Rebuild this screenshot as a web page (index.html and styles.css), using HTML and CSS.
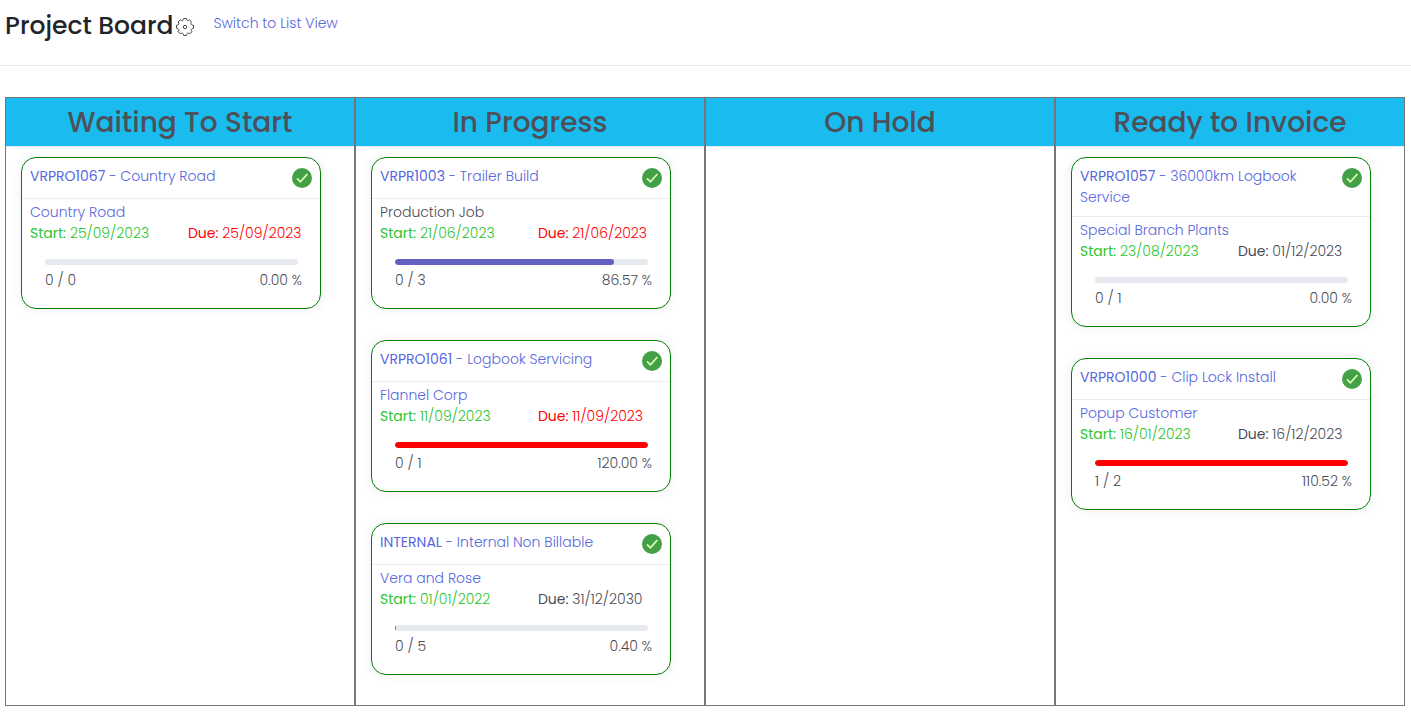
FILE: index.html
```html
<!DOCTYPE html>
<html lang="en">
<head>
    <meta charset="UTF-8">
    <meta name="viewport" content="width=device-width, initial-scale=1.0">
    <title>Project Board</title>
    <link rel="stylesheet" href="styles.css">
</head>
<body>
    <svg class="sprite" aria-hidden="true">
        <symbol id="check" viewBox="0 0 20 20">
            <circle cx="10" cy="10" r="10" fill="#43a047"/>
            <path d="M5 10.4l3.4 3.4L15.4 6" fill="none" stroke="#dcffb0" stroke-width="1.8"/>
        </symbol>
    </svg>
    <header class="page-header">
        <h1>Project Board</h1>
        <button class="settings" type="button" aria-label="Board settings">
            <svg viewBox="0 0 20 20" width="20" height="20" fill="none" stroke="#444" stroke-width="1">
                <path d="M8.600 1.500h2.800c.1 2.200 1.300 2.700 2.900 1.400l2.300 2c-1.400 1.800-.9 3 1.900 3.400v2.900c-2.300.3-2.900 1.600-1.500 3.600l-2 2c-1.900-1.400-3.200-.9-3.500 1.700H8.600c-.3-2.600-1.600-3.100-3.500-1.700l-2-2c1.400-2 .8-3.300-1.600-3.600V8.300c2.500-.4 3.100-1.600 1.700-3.400l2-2c1.700 1.300 3.100.8 3.400-1.400z" stroke-linejoin="round"/>
                <circle cx="10" cy="10" r="1.700"/>
            </svg>
        </button>
        <a class="switch" href="#">Switch to List View</a>
    </header>
    <main class="board">
        <section class="column">
            <h2>Waiting To Start</h2>
            <div class="cards">
                <article class="card">
                    <div class="card-head">
                        <a href="#"><b>VRPRO1067</b> - Country Road</a>
                        <svg class="check"><use href="#check"/></svg>
                    </div>
                    <div class="card-body">
                        <a href="#">Country Road</a>
                        <div class="dates">
                            <span class="start"><b>Start:</b> 25/09/2023</span>
                            <span class="overdue"><b>Due:</b> 25/09/2023</span>
                        </div>
                        <div class="bar"></div>
                        <div class="counts"><span>0 / 0</span><span>0.00 %</span></div>
                    </div>
                </article>
            </div>
        </section>
        <section class="column">
            <h2>In Progress</h2>
            <div class="cards">
                <article class="card">
                    <div class="card-head">
                        <a href="#"><b>VRPR1003</b> - Trailer Build</a>
                        <svg class="check"><use href="#check"/></svg>
                    </div>
                    <div class="card-body">
                        <span>Production Job</span>
                        <div class="dates">
                            <span class="start"><b>Start:</b> 21/06/2023</span>
                            <span class="overdue"><b>Due:</b> 21/06/2023</span>
                        </div>
                        <div class="bar"><div class="fill" style="width: 86.57%"></div></div>
                        <div class="counts"><span>0 / 3</span><span>86.57 %</span></div>
                    </div>
                </article>
                <article class="card">
                    <div class="card-head">
                        <a href="#"><b>VRPRO1061</b> - Logbook Servicing</a>
                        <svg class="check"><use href="#check"/></svg>
                    </div>
                    <div class="card-body">
                        <a href="#">Flannel Corp</a>
                        <div class="dates">
                            <span class="start"><b>Start:</b> 11/09/2023</span>
                            <span class="overdue"><b>Due:</b> 11/09/2023</span>
                        </div>
                        <div class="bar"><div class="fill over" style="width: 100%"></div></div>
                        <div class="counts"><span>0 / 1</span><span>120.00 %</span></div>
                    </div>
                </article>
                <article class="card">
                    <div class="card-head">
                        <a href="#"><b>INTERNAL</b> - Internal Non Billable</a>
                        <svg class="check"><use href="#check"/></svg>
                    </div>
                    <div class="card-body">
                        <a href="#">Vera and Rose</a>
                        <div class="dates">
                            <span class="start"><b>Start:</b> 01/01/2022</span>
                            <span><b>Due:</b> 31/12/2030</span>
                        </div>
                        <div class="bar"><div class="fill" style="width: 0.4%"></div></div>
                        <div class="counts"><span>0 / 5</span><span>0.40 %</span></div>
                    </div>
                </article>
            </div>
        </section>
        <section class="column">
            <h2>On Hold</h2>
            <div class="cards"></div>
        </section>
        <section class="column">
            <h2>Ready to Invoice</h2>
            <div class="cards">
                <article class="card">
                    <div class="card-head">
                        <a href="#"><b>VRPRO1057</b> - 36000km Logbook Service</a>
                        <svg class="check"><use href="#check"/></svg>
                    </div>
                    <div class="card-body">
                        <a href="#">Special Branch Plants</a>
                        <div class="dates">
                            <span class="start"><b>Start:</b> 23/08/2023</span>
                            <span><b>Due:</b> 01/12/2023</span>
                        </div>
                        <div class="bar"></div>
                        <div class="counts"><span>0 / 1</span><span>0.00 %</span></div>
                    </div>
                </article>
                <article class="card">
                    <div class="card-head">
                        <a href="#"><b>VRPRO1000</b> - Clip Lock Install</a>
                        <svg class="check"><use href="#check"/></svg>
                    </div>
                    <div class="card-body">
                        <a href="#">Popup Customer</a>
                        <div class="dates">
                            <span class="start"><b>Start:</b> 16/01/2023</span>
                            <span><b>Due:</b> 16/12/2023</span>
                        </div>
                        <div class="bar"><div class="fill over" style="width: 100%"></div></div>
                        <div class="counts"><span>1 / 2</span><span>110.52 %</span></div>
                    </div>
                </article>
            </div>
        </section>
    </main>
</body>
</html>
```
FILE: styles.css
```css
* {
    margin: 0;
    padding: 0;
    box-sizing: border-box;
}
body {
    font-family: Poppins, Inter, sans-serif;
    font-size: 14px;
    font-weight: 300;
    line-height: 21px;
    text-rendering: optimizeLegibility;
    color: #494c57;
    background: #fff;
}
a {
    color: #5867dd;
    text-decoration: none;
}
b {
    font-weight: 400;
}
.sprite {
    display: none;
}
.page-header {
    display: flex;
    align-items: flex-start;
    padding: 7px 5px 20px;
    border-bottom: 1px solid #e9e9ec;
}
h1 {
    font-size: 25px;
    font-weight: 500;
    line-height: 38px;
    color: #212529;
}
.settings {
    display: flex;
    margin: 10px 18px 0 2px;
    border: none;
    background: none;
    cursor: pointer;
}
.switch {
    margin-top: 6px;
}
.board {
    display: flex;
    margin: 31px 6px 9px 5px;
}
.column {
    flex: 1;
    border: 1px solid #777;
}
h2 {
    padding-top: 1px;
    font-size: 28px;
    font-weight: 500;
    line-height: 47px;
    text-align: center;
    color: #4d5059;
    background: #1abcef;
}
.cards {
    display: flex;
    flex-direction: column;
    gap: 31px;
    padding: 10px 33px 30px 15px;
    border-top: 1px solid #ebedf2;
}
.card {
    border: 1px solid green;
    border-radius: 15px;
    box-shadow: 0 0 10px rgba(82, 63, 105, .1);
}
.card-head {
    display: flex;
    justify-content: space-between;
    gap: 30px;
    min-height: 41px;
    padding: 8px;
    border-bottom: 1px solid #ebedf2;
}
.check {
    flex: none;
    width: 20px;
    height: 20px;
    margin-top: 2px;
}
.card-body {
    padding: 3px 8px 17px;
}
.dates {
    display: grid;
    grid-template-columns: 56% 1fr;
}
.start {
    color: #2dc52d;
}
.overdue {
    color: red;
}
.bar {
    height: 6px;
    margin: 15px 14px 5px 15px;
    border-radius: 3px;
    background: #e6e9ed;
    overflow: hidden;
}
.fill {
    height: 100%;
    border-radius: 3px;
    background: #6460c3;
}
.over {
    background: red;
}
.counts {
    display: flex;
    justify-content: space-between;
    padding: 0 10px 0 15px;
}
```
